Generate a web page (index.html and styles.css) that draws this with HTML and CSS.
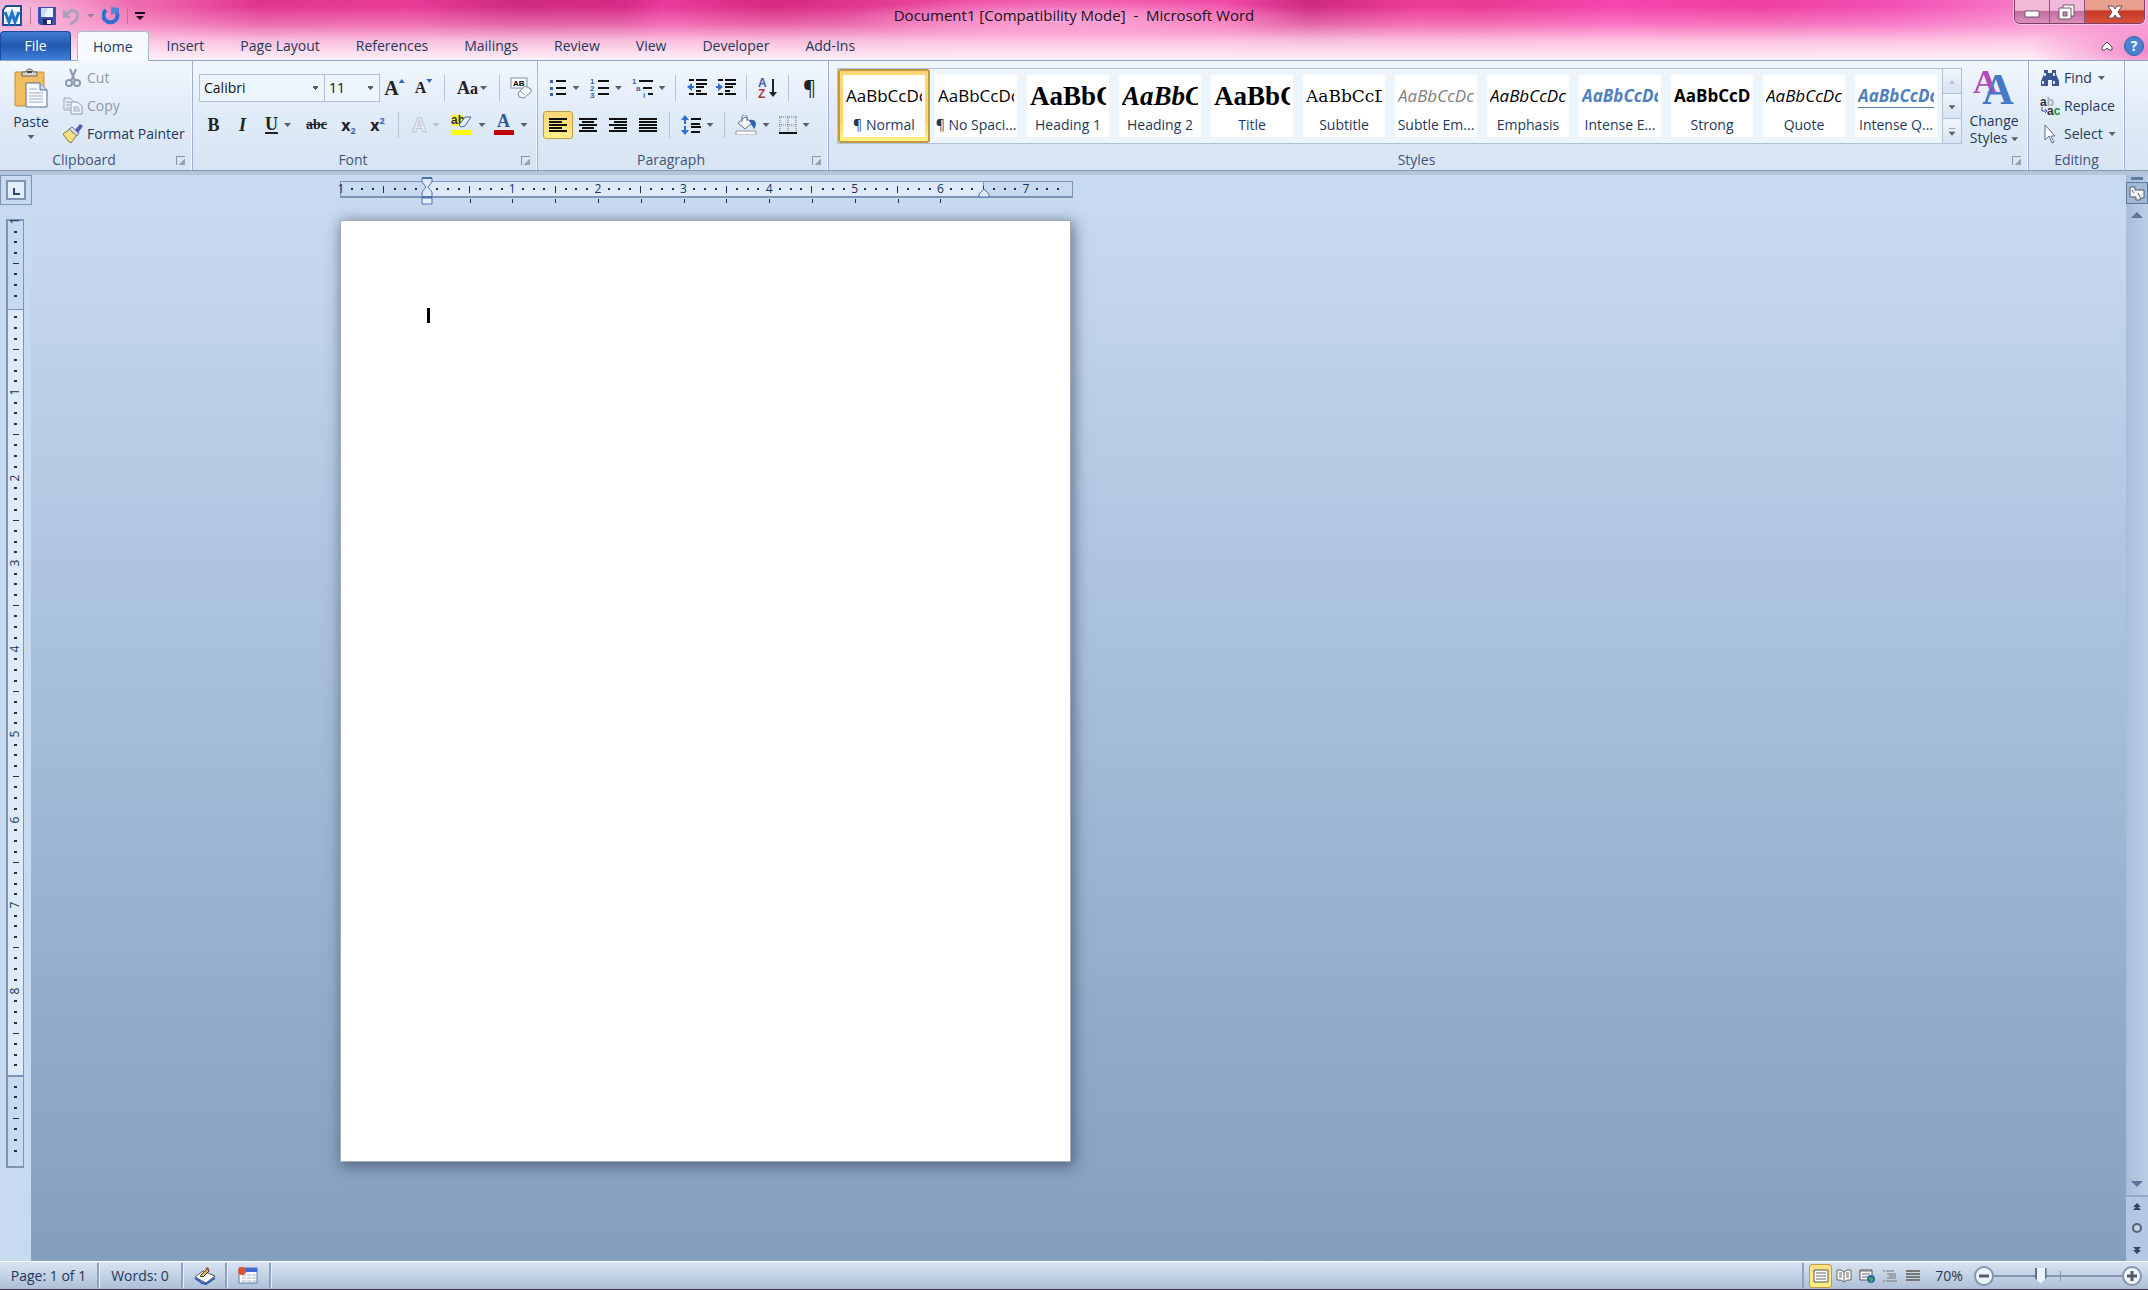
FILE: index.html
```html
<!DOCTYPE html>
<html lang="en">
<head>
  <meta charset="UTF-8">
  <title>Document1 [Compatibility Mode] - Microsoft Word</title>
  <link rel="stylesheet" href="styles.css">
</head>
<body>
  <!-- Title bar and tabs -->
  <header class="top">
    <div class="titlebar">
      <div class="quick-access">
        <svg width="22" height="22" viewBox="0 0 22 22"><path d="M5 1h15v19H2V5z" fill="#fff" stroke="#1c4f94" stroke-width="2"/><path d="M4 6h13v12H4z" fill="#d5e8fa"/><path d="M4 7l4 10 3-9 3 9 4-10" fill="none" stroke="#1f73cc" stroke-width="3"/></svg>
        <span class="qa-line"></span>
        <button aria-label="Save"><svg width="18" height="18" viewBox="0 0 18 18"><path d="M0 0h18v18H2l-2-2z" fill="#3d4fae"/><path d="M3 1h12v9H3z" fill="#c9daf6"/><path d="M10 1h5v9H6z" fill="#eef4fd"/><path d="M5 12h9v6H5z" fill="#1b2a66"/><path d="M9 13h4v4H9z" fill="#fff"/></svg></button>
        <button class="undo" aria-label="Undo"><svg width="32" height="18" viewBox="0 0 32 18"><path d="M3 8c6-8 14-4 11 3-1 3-4 5-7 6" fill="none" stroke="#a9a0bd" stroke-width="3"/><path d="M0 2v9h8z" fill="#a9a0bd"/><path d="M24 7h7l-3 4z" fill="#9b7b94"/></svg></button>
        <button aria-label="Repeat"><svg width="18" height="18" viewBox="0 0 18 18"><path d="M4 3a7 7 0 1 0 9 0" fill="none" stroke="#2f6fd0" stroke-width="4"/><path d="M9 0v8l8-4V1z" fill="#4b86dc"/></svg></button>
        <span class="qa-line"></span>
        <button aria-label="Customize Quick Access Toolbar"><svg width="10" height="8" viewBox="0 0 10 8"><path d="M0 0h10v2H0zM1 4h8L5 8z" fill="#111"/></svg></button>
      </div>
      <h1>Document1 [Compatibility Mode]&nbsp; -&nbsp; Microsoft Word</h1>
      <div class="window-buttons">
        <button class="minimize" aria-label="Minimize"><svg width="16" height="8" viewBox="0 0 16 8"><path d="M1 1h14v6H1z" fill="#fff" stroke="#6c5767"/></svg></button>
        <button class="restore" aria-label="Restore"><svg width="18" height="16" viewBox="0 0 18 16"><path d="M5 1h11v11H5z" fill="#fff" stroke="#6c5767"/><path d="M1 4h12v11H1z" fill="#fff" stroke="#6c5767"/><path d="M5 8h4v4H5z" fill="#c78bb1" stroke="#6c5767"/></svg></button>
        <button class="close" aria-label="Close"><svg width="16" height="14" viewBox="0 0 16 14"><path d="M1 1h5l2 3 2-3h5l-4 6 4 6h-5l-2-3-2 3H1l4-6z" fill="#fff" stroke="#6c4650"/></svg></button>
      </div>
    </div>
    <nav class="tabs">
      <button class="file-tab">File</button>
      <button class="tab active">Home</button>
      <button class="tab">Insert</button>
      <button class="tab">Page Layout</button>
      <button class="tab">References</button>
      <button class="tab">Mailings</button>
      <button class="tab">Review</button>
      <button class="tab">View</button>
      <button class="tab">Developer</button>
      <button class="tab">Add-Ins</button>
      <div class="tab-right">
        <button aria-label="Minimize the Ribbon"><svg width="12" height="10" viewBox="0 0 12 10"><path d="M1 6l5-5 5 5v3H8L6 7 4 9H1z" fill="#fff" stroke="#4e4a58"/></svg></button>
        <button class="help" aria-label="Help">?</button>
      </div>
    </nav>
  </header>

  <!-- Ribbon -->
  <section class="ribbon">
    <div class="group clipboard">
      <div class="group-body">
        <button class="big-button">
          <svg width="34" height="40" viewBox="0 0 34 40"><rect x="1" y="4" width="29" height="34" rx="1" fill="#f0bd60" stroke="#c28f3c"/><path d="M8 8V4h4c0-4 7-4 7 0h4v4z" fill="#d7d4cd" stroke="#686560"/><path d="M13 4h5" stroke="#444" stroke-width="2"/><path d="M12 15h14l7 7v17H12z" fill="#f8faff" stroke="#53739c"/><path d="M26 15v7h7" fill="#cbd9ee" stroke="#53739c"/><path d="M15 21h8M15 25h14M15 28h14M15 31h14M15 34h14" stroke="#9eacc6"/></svg>
          <span>Paste</span>
          <i class="caret"></i>
        </button>
        <div class="side-list">
          <button class="muted"><svg width="20" height="20" viewBox="0 0 20 20"><path d="M7 1l5 12M13 1L8 13" stroke="#8c9bb1" stroke-width="2"/><circle cx="6" cy="15" r="3" fill="none" stroke="#8c9bb1" stroke-width="2"/><circle cx="14" cy="15" r="3" fill="none" stroke="#8c9bb1" stroke-width="2"/></svg>Cut</button>
          <button class="muted"><svg width="20" height="20" viewBox="0 0 20 20"><path d="M1 2h6l4 4v8H1z" fill="#e6edf6" stroke="#9aa8bc"/><path d="M8 6h6l5 4v8H8z" fill="#f2f6fb" stroke="#8d9cb3"/><path d="M3 6h4M3 9h4M3 12h4M10 11h6M10 13h7M10 15h7" stroke="#9aa8bc"/></svg>Copy</button>
          <button><svg width="20" height="20" viewBox="0 0 20 20"><path d="M0 10l7-5 7 6-6 8-3-2z" fill="#f6df82" stroke="#8a7640"/><path d="M6 5l3-2 7 6-2 3z" fill="#d8dee9" stroke="#6c7686"/><path d="M12 6l5-6 3 2-5 7z" fill="#5b58b4"/></svg>Format Painter</button>
        </div>
      </div>
      <div class="group-name">Clipboard<button class="launcher" aria-label="Clipboard options"></button></div>
    </div>

    <div class="group font">
      <div class="group-body rows">
        <div class="row">
          <select class="font-name" aria-label="Font"><option>Calibri</option></select>
          <select class="font-size" aria-label="Font Size"><option>11</option></select>
          <button class="tool serif grow">A<i class="mini up"></i></button>
          <button class="tool serif shrink">A<i class="mini down"></i></button>
          <span class="sep"></span>
          <button class="tool split serif case"><span>A<small>a</small></span><i class="caret"></i></button>
          <span class="sep"></span>
          <button class="tool" aria-label="Clear Formatting"><svg width="22" height="22" viewBox="0 0 22 22"><rect x="1" y="1" width="16" height="10" fill="#fff" stroke="#7e8ea8"/><text x="3" y="9" class="tiny">AB</text><path d="M8 16l7-7 6 3v3l-7 6-5-1z" fill="#f4f6fb" stroke="#7787a5"/><path d="M10 14l5 4" stroke="#9aa9c4"/></svg></button>
        </div>
        <div class="row">
          <button class="tool serif bold">B</button>
          <button class="tool serif italic">I</button>
          <button class="tool split serif under"><span>U</span><i class="caret"></i></button>
          <button class="tool wide serif strike">abc</button>
          <button class="tool script">x<sub>2</sub></button>
          <button class="tool script">x<sup>2</sup></button>
          <span class="sep"></span>
          <button class="tool split effects"><span>A</span><i class="caret pale"></i></button>
          <button class="tool split" aria-label="Text Highlight Color"><svg width="22" height="22" viewBox="0 0 22 22"><rect x="0" y="1" width="12" height="11" fill="#f4f23c"/><text x="0" y="10" class="ab">ab</text><path d="M8 11l6-8h6l-6 9-4 1z" fill="#e4ecf8" stroke="#48679c"/><path d="M1 16h20v5H1z" fill="#ffff00"/></svg><i class="caret"></i></button>
          <button class="tool split" aria-label="Font Color"><svg width="22" height="22" viewBox="0 0 22 22"><text x="4" y="13" class="color-a">A</text><path d="M1 16h20v5H1z" fill="#c00000"/></svg><i class="caret"></i></button>
        </div>
      </div>
      <div class="group-name">Font<button class="launcher" aria-label="Font options"></button></div>
    </div>

    <div class="group paragraph">
      <div class="group-body rows">
        <div class="row">
          <button class="tool split" aria-label="Bullets"><svg width="18" height="18" viewBox="0 0 18 18"><path d="M7 2h10M7 9h10M7 15h10" stroke="#111" stroke-width="2"/><path d="M1 1h3v3H1zM1 8h3v3H1zM1 14h3v3H1z" fill="#3a62b0"/></svg><i class="caret"></i></button>
          <button class="tool split" aria-label="Numbering"><svg width="19" height="20" viewBox="0 0 19 20"><path d="M8 3h11M8 10h11M8 16h11" stroke="#111" stroke-width="2"/><text x="0" y="6" class="num">1</text><text x="0" y="13" class="num">2</text><text x="0" y="20" class="num">3</text></svg><i class="caret"></i></button>
          <button class="tool split" aria-label="Multilevel List"><svg width="22" height="20" viewBox="0 0 22 20"><path d="M8 3h14M12 10h9M17 16h5" stroke="#111" stroke-width="2"/><text x="1" y="6" class="num">1</text><text x="5" y="13" class="num">a</text><text x="12" y="20" class="num">i</text></svg><i class="caret"></i></button>
          <span class="sep"></span>
          <button class="tool" aria-label="Decrease Indent"><svg width="20" height="20" viewBox="0 0 20 20"><path d="M2 2h5M9 2h11M9 6h11M9 9h8M9 13h5M2 16h5M9 16h11" stroke="#111" stroke-width="2"/><path d="M0 9l5-4v3h2v2H5v3z" fill="#2f6fd0"/></svg></button>
          <button class="tool" aria-label="Increase Indent"><svg width="20" height="20" viewBox="0 0 20 20"><path d="M2 2h5M9 2h11M9 6h11M9 9h8M9 13h5M2 16h5M9 16h11" stroke="#111" stroke-width="2"/><path d="M7 9L2 5v3H0v2h2v3z" fill="#2f6fd0"/></svg></button>
          <span class="sep"></span>
          <button class="tool" aria-label="Sort"><svg width="20" height="20" viewBox="0 0 20 20"><text x="0" y="9" class="sort-a">A</text><text x="0" y="20" class="sort-z">Z</text><path d="M15 1v16" stroke="#222" stroke-width="2"/><path d="M11 14h8l-4 5z" fill="#222"/></svg></button>
          <span class="sep"></span>
          <button class="tool pilcrow">¶</button>
        </div>
        <div class="row">
          <button class="tool align on" aria-label="Align Left"><svg width="18" height="16" viewBox="0 0 18 16"><path d="M0 2h18M0 5h13M0 8h18M0 11h13M0 14h18" stroke="#111" stroke-width="2"/></svg></button>
          <button class="tool align" aria-label="Center"><svg width="18" height="16" viewBox="0 0 18 16"><path d="M0 2h18M3 5h12M0 8h18M3 11h12M0 14h18" stroke="#111" stroke-width="2"/></svg></button>
          <button class="tool align" aria-label="Align Right"><svg width="18" height="16" viewBox="0 0 18 16"><path d="M0 2h18M5 5h13M0 8h18M5 11h13M0 14h18" stroke="#111" stroke-width="2"/></svg></button>
          <button class="tool align" aria-label="Justify"><svg width="18" height="16" viewBox="0 0 18 16"><path d="M0 2h18M0 5h18M0 8h18M0 11h18M0 14h18" stroke="#111" stroke-width="2"/></svg></button>
          <span class="sep"></span>
          <button class="tool split" aria-label="Line Spacing"><svg width="20" height="20" viewBox="0 0 20 20"><path d="M10 4h10M10 9h9M10 12h10M10 17h9" stroke="#111" stroke-width="2"/><path d="M4 3v14" stroke="#2f6fd0" stroke-width="2" stroke-dasharray="6 2"/><path d="M0 5l4-5 4 5zM0 15l4 5 4-5z" fill="#2f6fd0"/></svg><i class="caret"></i></button>
          <span class="sep"></span>
          <button class="tool split" aria-label="Shading"><svg width="22" height="20" viewBox="0 0 22 20"><path d="M3 8l7-6 7 6-7 6z" fill="#f7f9fd" stroke="#5f7292"/><path d="M7 7V2c0-3 5-3 5 0v4" fill="none" stroke="#5f7292"/><path d="M14 5c8-2 8 5 5 9l-3-5z" fill="#2e64b4"/><path d="M1 16h20v4H1z" fill="#fff" stroke="#999"/></svg><i class="caret"></i></button>
          <button class="tool split" aria-label="Borders"><svg width="18" height="18" viewBox="0 0 18 18"><path d="M0 1h18M0 9h18M1 0v16M9 0v16M17 0v16" stroke="#777" stroke-dasharray="1 1"/><path d="M0 17h18" stroke="#111" stroke-width="2"/></svg><i class="caret"></i></button>
        </div>
      </div>
      <div class="group-name">Paragraph<button class="launcher" aria-label="Paragraph options"></button></div>
    </div>

    <div class="group styles">
      <div class="group-body">
        <div class="gallery">
          <button class="style on"><span class="sample">AaBbCcDc</span><span class="label">¶ Normal</span></button>
          <button class="style"><span class="sample">AaBbCcDc</span><span class="label">¶ No Spaci...</span></button>
          <button class="style"><span class="sample heading">AaBbC</span><span class="label">Heading 1</span></button>
          <button class="style"><span class="sample heading slanted">AaBbCc</span><span class="label">Heading 2</span></button>
          <button class="style"><span class="sample heading">AaBbC</span><span class="label">Title</span></button>
          <button class="style"><span class="sample subtitle">AaBbCcD</span><span class="label">Subtitle</span></button>
          <button class="style"><span class="sample slanted grey">AaBbCcDc</span><span class="label">Subtle Em...</span></button>
          <button class="style"><span class="sample slanted">AaBbCcDc</span><span class="label">Emphasis</span></button>
          <button class="style"><span class="sample slanted blue">AaBbCcDc</span><span class="label">Intense E...</span></button>
          <button class="style"><span class="sample strong">AaBbCcDc</span><span class="label">Strong</span></button>
          <button class="style"><span class="sample slanted">AaBbCcDc</span><span class="label">Quote</span></button>
          <button class="style"><span class="sample slanted blue lined">AaBbCcDc</span><span class="label">Intense Q...</span></button>
          <div class="gallery-scroll">
            <button aria-label="Previous styles" disabled><i class="caret up pale"></i></button>
            <button aria-label="Next styles"><i class="caret"></i></button>
            <button aria-label="More styles"><i class="caret more"></i></button>
          </div>
        </div>
        <button class="big-button change">
          <svg width="42" height="38" viewBox="0 0 42 38"><text x="0" y="25" class="change-a">A</text><text x="9" y="36" class="change-b">A</text></svg>
          <span>Change</span>
          <span>Styles <i class="caret"></i></span>
        </button>
      </div>
      <div class="group-name">Styles<button class="launcher" aria-label="Styles options"></button></div>
    </div>

    <div class="group editing">
      <div class="group-body">
        <div class="side-list">
          <button><svg width="20" height="18" viewBox="0 0 20 18"><path d="M4 1h4v3h4V1h4v4l3 7v5h-7v-6H8v6H1v-5l3-7z" fill="#3a5591"/><path d="M5 4v3M14 4v3M3 12v3M14 12v3" stroke="#d9e6fa" stroke-width="2"/></svg>Find <i class="caret"></i></button>
          <button><svg width="20" height="20" viewBox="0 0 20 20"><text x="0" y="10" class="ab">a<tspan fill="#a8adb5">b</tspan></text><text x="7" y="19" class="ab">a<tspan fill="#159015">c</tspan></text><path d="M2 11v4h5M5 13l2 2-2 2" fill="none" stroke="#3b55a0"/></svg>Replace</button>
          <button><svg width="20" height="20" viewBox="0 0 20 20"><path d="M5 1v15l4-4 3 7 2-1-3-6h4z" fill="#fff" stroke="#5e6c8e"/></svg>Select <i class="caret"></i></button>
        </div>
      </div>
      <div class="group-name">Editing</div>
    </div>
  </section>

  <!-- Workspace -->
  <main class="workspace">
    <aside class="left-rail">
      <button class="tab-stop" aria-label="Left Tab"><svg width="20" height="20" viewBox="0 0 20 20"><path d="M1 1h18v18H1z" fill="#e4eefa" stroke="#7b94b8" stroke-width="2"/><path d="M8 8v6h6" fill="none" stroke="#2b4a77" stroke-width="2"/></svg></button>
      <div class="ruler vertical" id="rulerV"></div>
    </aside>
    <div class="document">
      <div class="ruler horizontal" id="rulerH">
        <svg class="indent left" width="12" height="28" viewBox="0 0 12 28"><path d="M1 1h10v4l-4 5 4 5v5H1v-5l4-5-4-5z" fill="#dfe8f5" stroke="#4c70ad"/><path d="M1 1h10M1 20h10" stroke="#4c70ad" stroke-width="2"/><path d="M1 21h10v6H1z" fill="#e8eff9" stroke="#4c70ad"/></svg>
        <svg class="indent right" width="12" height="10" viewBox="0 0 12 10"><path d="M1 9V6l5-5 5 5v3z" fill="#dfe8f5" stroke="#4c70ad"/></svg>
      </div>
      <div class="half-ticks" id="halfTicks"></div>
      <div class="paper" contenteditable="true" aria-label="Document"><span class="cursor"></span></div>
    </div>
    <aside class="scrollbar">
      <span class="split-handle"></span>
      <button class="view-ruler" aria-label="View Ruler"><svg width="16" height="16" viewBox="0 0 16 16"><path d="M1 2h5v3h9v8h-4v2H7v-3H1z" fill="#f5f3f6" stroke="#555a66"/><path d="M3 5l2 3M9 8l2 4" stroke="#555a66"/></svg></button>
      <button aria-label="Scroll up"><i class="arrow up"></i></button>
      <div class="track"></div>
      <button aria-label="Scroll down"><i class="arrow"></i></button>
      <button class="browse first" aria-label="Previous Page"><svg width="8" height="8" viewBox="0 0 8 8"><path d="M4 0l4 4H0zM4 3l4 4H0z" fill="#37435a"/></svg></button>
      <button class="browse" aria-label="Select Browse Object"><svg width="10" height="10" viewBox="0 0 10 10"><circle cx="5" cy="5" r="4" fill="#c3d2e4" stroke="#566273" stroke-width="2"/></svg></button>
      <button class="browse" aria-label="Next Page"><svg width="8" height="8" viewBox="0 0 8 8"><path d="M4 8L0 4h8zM4 5L0 1h8z" fill="#37435a"/></svg></button>
    </aside>
  </main>

  <!-- Status bar -->
  <footer class="status">
    <button class="cell page-cell">Page: 1 of 1</button>
    <button class="cell words-cell">Words: 0</button>
    <button class="cell icon-cell" aria-label="Proofing"><svg width="22" height="18" viewBox="0 0 22 18"><path d="M1 10l8-6 12 5-9 7z" fill="#fff" stroke="#555"/><path d="M1 11l7 5 4 1 9-6" fill="none" stroke="#2f5fc0" stroke-width="2"/><path d="M6 9l7-7 2 2-6 6z" fill="#e6b83c" stroke="#444"/><path d="M11 1l3-1 2 4z" fill="#cf4a3a"/></svg></button>
    <button class="cell icon-cell" aria-label="Macro Recording"><svg width="20" height="17" viewBox="0 0 20 17"><path d="M1 1h18v15H1z" fill="#fff" stroke="#5c79b0"/><path d="M1 1h18v4H1z" fill="#3c6bd6"/><path d="M4 8h4M9 8h4M14 8h4M4 11h4M9 11h4M14 11h4M4 14h4M9 14h4M14 14h4" stroke="#9fb0cc"/><circle cx="4" cy="4" r="4" fill="#d8553a"/></svg></button>
    <div class="status-right">
      <span class="sbar"></span>
      <button class="view on" aria-label="Print Layout"><svg width="16" height="14" viewBox="0 0 16 14"><path d="M1 1h14v12H1z" fill="#fff" stroke="#555"/><path d="M3 4h10M3 7h10M3 10h10" stroke="#666"/></svg></button>
      <button class="view" aria-label="Full Screen Reading"><svg width="16" height="14" viewBox="0 0 16 14"><path d="M1 1h4l3 2 3-2h4v10h-4l-3 2-3-2H1z" fill="#fff" stroke="#666"/><path d="M8 3v10M3 4h3M3 6h3M3 8h3M10 4h3M10 6h3M10 8h3" stroke="#666"/></svg></button>
      <button class="view" aria-label="Web Layout"><svg width="16" height="14" viewBox="0 0 16 14"><path d="M1 1h12v10H1z" fill="#fff" stroke="#555"/><path d="M1 2h12M3 5h8M3 8h6" stroke="#666"/><circle cx="12" cy="10" r="4" fill="#2c6ba8"/><path d="M10 9l3 1-1 3" stroke="#3faf50" stroke-width="2" fill="none"/></svg></button>
      <button class="view" aria-label="Outline"><svg width="14" height="12" viewBox="0 0 14 12"><path d="M0 1h2M3 1h8M4 4h9M6 6h7M4 8h9M0 11h2M3 11h11" stroke="#777"/></svg></button>
      <button class="view" aria-label="Draft"><svg width="14" height="12" viewBox="0 0 14 12"><path d="M0 1h14M0 4h14M0 7h14M0 10h14" stroke="#777" stroke-width="2"/></svg></button>
      <button class="zoom-level">70%</button>
      <button class="round" aria-label="Zoom Out"><svg width="10" height="10" viewBox="0 0 10 10"><path d="M0 5h10" stroke="#555b66" stroke-width="3"/></svg></button>
      <input class="zoom" type="range" min="0" max="100" value="35" aria-label="Zoom">
      <button class="round" aria-label="Zoom In"><svg width="10" height="10" viewBox="0 0 10 10"><path d="M0 5h10M5 0v10" stroke="#555b66" stroke-width="3"/></svg></button>
    </div>
  </footer>

  <script src="ruler.js"></script>
</body>
</html>
```
FILE: styles.css
```css
* {
  box-sizing: border-box;
}
body {
  margin: 0;
  height: 100vh;
  display: flex;
  flex-direction: column;
  overflow: hidden;
  font-family: "Open Sans", "Noto Sans", sans-serif;
  font-size: 14px;
  line-height: 18px;
  color: #1e395b;
}
button {
  border: 0;
  padding: 0;
  margin: 0;
  background: none;
  font: inherit;
  color: inherit;
}
svg {
  display: block;
  flex: none;
}

/* Title bar */
.top {
  background:
    radial-gradient(ellipse 140px 34px at 0% 20%, rgba(250, 205, 230, 0.9), transparent),
    radial-gradient(ellipse 120px 40px at 100% 85%, rgba(240, 110, 190, 0.8), transparent),
    radial-gradient(ellipse 230px 22px at 50% 30%, rgba(255, 200, 230, 0.65), transparent),
    linear-gradient(rgba(255, 255, 255, 0) 10%, rgba(255, 190, 225, 0.4) 40%, rgba(255, 215, 236, 0.85) 68%, #fef2f8),
    linear-gradient(90deg, #f080bc 0, #ee66ac 7%, #e0358f 12%, #e83c97 19%, #cf2a80 24%, #d62b86 29%, #ea3a9c 31%, #d6297f 36%, #ee4ba4 45%, #f04aa6 57%, #cf2a80 61%, #ec3c96 66%, #ea3a93 69%, #f545ae 75%, #ee40a0 82%, #f34fb5 88%, #f9a0d6 100%);
  border-bottom: 1px solid #8ea5c2;
}
.titlebar {
  height: 31px;
  display: grid;
  grid-template-columns: 1fr auto 1fr;
}
.quick-access {
  display: flex;
  align-items: center;
  gap: 7px;
  padding-left: 1px;
}
.qa-line {
  width: 1px;
  height: 17px;
  background: #a87b97;
}
.titlebar h1 {
  margin: 0;
  font-size: 15px;
  line-height: 30px;
  font-weight: 400;
  color: #1a1018;
}
.window-buttons {
  display: flex;
  justify-self: end;
  height: 24px;
  margin-right: 3px;
  border: 1px solid #7f3f62;
  border-top: 0;
  border-radius: 0 0 6px 6px;
  box-shadow: 0 0 0 1px rgba(255, 220, 240, 0.7);
  overflow: hidden;
}
.window-buttons button {
  width: 35px;
  display: flex;
  align-items: center;
  justify-content: center;
  border-right: 1px solid #8f4f76;
  background: linear-gradient(#f2b9d9 45%, #c46c9f 50%, #dc8fbc);
}
.window-buttons .minimize {
  padding-top: 5px;
}
.window-buttons .close {
  width: 59px;
  border-right: 0;
  background: linear-gradient(#e9a08e 40%, #c8392a 50%, #d9513a);
}

/* Tabs */
.tabs {
  display: flex;
  height: 29px;
}
.file-tab {
  width: 71px;
  margin-right: 6px;
  color: #fff;
  border: 1px solid #1b479c;
  border-bottom: 0;
  border-radius: 4px 4px 0 0;
  background: linear-gradient(#3f7cd0, #2359b0 50%, #3f80dd);
}
.tab {
  padding: 0 18px;
}
.tab.active {
  background: #f6fafe;
  border: 1px solid #a9bbd3;
  border-bottom: 0;
  border-radius: 4px 4px 0 0;
  padding: 0 15px;
  margin-bottom: -1px;
}
.tab-right {
  margin-left: auto;
  display: flex;
  align-items: center;
  gap: 11px;
  padding-right: 4px;
}
.help {
  width: 20px;
  height: 20px;
  border-radius: 50%;
  border: 1px solid #2d62b0;
  background: #4b83d0;
  color: #fff;
  font-weight: 700;
  line-height: 18px;
}

/* Ribbon */
.ribbon {
  display: flex;
  height: 110px;
  background: linear-gradient(#f1f7fd, #e0ebf8 50%, #d8e4f2);
  border-bottom: 1px solid #8499b8;
}
.group {
  display: flex;
  flex-direction: column;
  padding-top: 7px;
  border-right: 1px solid #9db2d0;
  box-shadow: inset -1px 0 #f5f9fe;
}
.clipboard {
  width: 193px;
}
.font {
  width: 345px;
}
.paragraph {
  width: 291px;
}
.styles {
  width: 1200px;
}
.editing {
  width: 96px;
}
.group-body {
  height: 82px;
  display: flex;
}
.group-name {
  text-align: center;
  line-height: 20px;
  color: #3f557d;
  position: relative;
  padding-right: 24px;
}
.editing .group-name {
  padding-right: 0;
}
.launcher {
  position: absolute;
  right: 7px;
  top: 6px;
  width: 9px;
  height: 9px;
  border-top: 1px solid #8694aa;
  border-left: 1px solid #8694aa;
  background: linear-gradient(135deg, transparent 60%, #96a2b4 60%);
}
.caret {
  display: inline-block;
  width: 7px;
  height: 4px;
  background: #5a5f69;
  clip-path: polygon(0 0, 100% 0, 50% 100%);
  vertical-align: middle;
}
.caret.up {
  clip-path: polygon(50% 0, 100% 100%, 0 100%);
}
.caret.pale {
  background: #b7c3d3;
}
.caret.more {
  height: 8px;
  clip-path: polygon(0 0, 100% 0, 100% 12%, 0 12%, 0 50%, 100% 50%, 50% 100%, 0 50%);
}
.big-button {
  display: flex;
  flex-direction: column;
  align-items: center;
  width: 62px;
}
.big-button svg {
  margin-bottom: 5px;
}
.clipboard .caret {
  margin-top: 4px;
}
.side-list {
  display: flex;
  flex-direction: column;
  gap: 8px;
}
.side-list button {
  display: flex;
  align-items: center;
  gap: 4px;
  height: 20px;
  white-space: nowrap;
}
.side-list .caret {
  margin-left: 2px;
}
.clipboard .side-list {
  margin-left: 1px;
}
.muted {
  color: #8e99aa;
}
.editing .side-list {
  margin-left: 11px;
}

.rows {
  flex-direction: column;
  gap: 9px;
  padding: 6px 0 0 5px;
}
.font .rows {
  padding-left: 6px;
}
.row {
  display: flex;
  height: 28px;
}
.tool {
  width: 29px;
  display: flex;
  align-items: center;
  justify-content: center;
  color: #222;
}
.split {
  width: 42px;
  gap: 8px;
}
.split svg,
.split span {
  margin-right: -2px;
}
.wide {
  width: 35px;
}
.align {
  width: 30px;
}
.tool.on {
  border: 1px solid #c29b45;
  border-radius: 3px;
  background: linear-gradient(#fbd777, #fbe27f 60%, #fff08a);
}
.sep {
  width: 1px;
  margin: 1px 6px;
  background: #b4c3d9;
}
select {
  appearance: none;
  border: 1px solid #afc1db;
  border-radius: 0;
  padding: 0 4px;
  font: inherit;
  color: #111;
  background:
    linear-gradient(#5a5f69, #5a5f69) right 8px center / 1px 3px no-repeat,
    linear-gradient(#5a5f69, #5a5f69) right 7px top 12px / 3px 2px no-repeat,
    linear-gradient(#5a5f69, #5a5f69) right 6px top 11px / 5px 2px no-repeat,
    #edf5fc;
}
.font-name {
  width: 126px;
}
.font-size {
  width: 55px;
  border-left: 0;
}
.serif {
  font-family: "Liberation Serif", serif;
  font-size: 18px;
  font-weight: 700;
}
.grow {
  font-size: 20px;
}
.shrink {
  font-size: 16px;
}
.mini {
  width: 6px;
  height: 4px;
  background: #3463b5;
  align-self: flex-start;
  margin-top: 5px;
  clip-path: polygon(0 0, 100% 0, 50% 100%);
}
.mini.up {
  clip-path: polygon(50% 0, 100% 100%, 0 100%);
}
.case {
  gap: 4px;
}
.case small {
  font-size: 16px;
}
.italic {
  font-style: italic;
}
.under span {
  border-bottom: 2px solid #222;
  line-height: 16px;
}
.strike {
  font-size: 14px;
  text-decoration: line-through;
}
.script {
  font-weight: 700;
  font-size: 16px;
}
.script sub,
.script sup {
  font-size: 9px;
  line-height: 9px;
  color: #3463b5;
}
.script sub {
  align-self: flex-end;
  margin-bottom: 4px;
}
.script sup {
  align-self: flex-start;
  margin-top: 5px;
}
.effects {
  font-size: 20px;
  font-weight: 700;
  color: #e9edf3;
  -webkit-text-stroke: 1px #c1c8d2;
}
.pilcrow {
  font-size: 20px;
}
.tiny {
  font: 700 8px "Liberation Sans", sans-serif;
}
.ab {
  font: 700 12px "Liberation Sans", sans-serif;
  fill: #333;
}
.color-a {
  font: 700 18px "Liberation Serif", serif;
  fill: #33549a;
}
.num {
  font: 700 8px "Liberation Sans", sans-serif;
  fill: #3a62b0;
}
.sort-a,
.sort-z {
  font: 700 12px "Liberation Sans", sans-serif;
  fill: #3a5fa8;
}
.sort-z {
  fill: #a83b3b;
}

/* Styles gallery */
.gallery {
  display: flex;
  height: 76px;
  margin-left: 8px;
  border: 1px solid #afc1db;
  background: #edf5fc;
}
.style {
  width: 92px;
  padding: 6px 5px;
}
.style.on {
  border: 2px solid #c59a3c;
  border-radius: 3px;
  padding: 4px 3px;
  background: linear-gradient(#fbd777, #fbd469 70%, #fff08a);
}
.sample,
.label {
  display: block;
  background: #fff;
  overflow: hidden;
  white-space: nowrap;
}
.sample {
  height: 38px;
  padding: 0;
  border: solid #fff;
  border-width: 0 3px;
  line-height: 42px;
  font-size: 17px;
  color: #000;
  text-align: left;
}
.label {
  height: 24px;
  line-height: 24px;
}
.heading {
  font-family: "Liberation Serif", serif;
  font-size: 27px;
  font-weight: 700;
}
.subtitle {
  font-family: "DejaVu Serif", serif;
}
.slanted {
  font-style: italic;
}
.grey {
  color: #808080;
}
.blue {
  color: #4f81bd;
  font-weight: 700;
}
.lined {
  background: linear-gradient(#4f81bd, #4f81bd) left bottom 5px / 100% 1px no-repeat #fff;
}
.strong {
  font-weight: 700;
}
.gallery-scroll {
  display: flex;
  flex-direction: column;
  width: 19px;
  border-left: 1px solid #afc1db;
}
.gallery-scroll button {
  flex: 1;
  line-height: 8px;
  background: linear-gradient(#f1f6fc, #d7e3f2);
}
.gallery-scroll button + button {
  border-top: 1px solid #afc1db;
}
.change {
  width: 64px;
}
.change svg {
  margin-bottom: 6px;
}
.change span {
  line-height: 17px;
}
.change-a {
  font: 700 34px "Liberation Serif", serif;
  fill: #b04cba;
}
.change-b {
  font: 700 44px "Liberation Serif", serif;
  fill: #4579c8;
}

/* Workspace */
.workspace {
  flex: 1;
  min-height: 0;
  display: flex;
  border-top: 4px solid #b4c5da;
  background: linear-gradient(#c8daf0 3%, #9bb5d2 62%, #839fbd);
}
.left-rail {
  width: 31px;
  background: #c8daf0;
}
.tab-stop {
  display: flex;
  align-items: center;
  justify-content: center;
  width: 32px;
  height: 30px;
  border: 1px solid #7b94b8;
}
.ruler {
  display: flex;
  justify-content: space-between;
  border: 1px solid #7b94b8;
  font-size: 12px;
  line-height: 14px;
  color: #12335f;
  position: relative;
}
.ruler span,
.half-ticks span {
  display: flex;
  align-items: center;
  justify-content: center;
}
.ruler i {
  flex: none;
  width: 2px;
  height: 2px;
  background: #12335f;
}
.horizontal span {
  width: 0;
}
.horizontal .half {
  width: 1px;
  height: 7px;
}
.horizontal {
  width: 733px;
  height: 17px;
  padding-right: 3px;
  border-bottom-width: 2px;
  background: linear-gradient(90deg, #c8daf0 87px, #deeaf8 87px 642px, #7b94b8 642px 643px, #c8daf0 643px);
}
.vertical {
  flex-direction: column;
  width: 18px;
  height: 949px;
  margin: 14px 0 0 6px;
  padding-bottom: 4px;
  border-width: 2px 1px 2px 2px;
  background: linear-gradient(#c8daf0 88px, #7b94b8 88px 89px, #deeaf8 89px 854px, #7b94b8 854px 856px, #c8daf0 856px);
}
.vertical span {
  height: 0;
}
.vertical i {
  width: 3px;
}
.vertical .half {
  width: 6px;
  height: 1px;
}
.vertical b {
  transform: rotate(-90deg);
}
.ruler b {
  font-weight: 400;
}
.indent {
  position: absolute;
}
.indent.left {
  left: 80px;
  top: -5px;
}
.indent.right {
  left: 637px;
  top: 6px;
}
.document {
  flex: 1;
  padding: 6px 0 0 309px;
}
.half-ticks {
  display: flex;
  justify-content: space-between;
  width: 471px;
  height: 4px;
  margin: 1px 0 0 130px;
}
.half-ticks span {
  width: 0;
}
.half-ticks i {
  flex: none;
  width: 1px;
  height: 4px;
  background: #12335f;
}
.paper {
  width: 731px;
  height: 942px;
  margin-top: 17px;
  padding: 87px 86px;
  background: #fff;
  border: 1px solid #a5acb5;
  box-shadow: 2px 3px 14px 1px rgba(50, 65, 90, 0.65);
  outline: 0;
}
.cursor {
  display: block;
  width: 3px;
  height: 15px;
  background: #000;
}

/* Scroll bar */
.scrollbar {
  width: 22px;
  display: flex;
  flex-direction: column;
  background: linear-gradient(90deg, #a9bdd8, #bccfe8);
}
.split-handle {
  height: 3px;
  margin: 2px 5px;
  background: #5f7a9c;
}
.scrollbar button {
  display: flex;
  align-items: center;
  justify-content: center;
  height: 22px;
}
.scrollbar .view-ruler {
  border: 1px solid #5f7a9c;
  background: #9fb8d6;
}
.arrow {
  width: 12px;
  height: 6px;
  background: #62729a;
  clip-path: polygon(0 0, 100% 0, 50% 100%);
}
.arrow.up {
  clip-path: polygon(50% 0, 100% 100%, 0 100%);
}
.track {
  flex: 1;
}
.scrollbar .browse {
  background: #b1c7e2;
}
.scrollbar .first {
  border-top: 2px solid #93aac8;
}

/* Status bar */
.status {
  display: flex;
  height: 29px;
  padding: 1px 0;
  border-top: 1px solid #fff;
  border-bottom: 1px solid #4d2a4d;
  background: linear-gradient(#d8e4f3, #aebfd5);
}
.cell {
  border-right: 2px solid #8ea2bf;
  box-shadow: 1px 0 #e5eef9;
}
.page-cell {
  width: 99px;
}
.words-cell {
  width: 84px;
}
.icon-cell {
  width: 44px;
  padding-left: 11px;
}
.status-right {
  margin-left: auto;
  display: flex;
  align-items: center;
  padding-right: 6px;
}
.sbar {
  width: 2px;
  height: 25px;
  margin-right: 5px;
  background: #8ea2bf;
}
.view {
  width: 23px;
  height: 24px;
  display: flex;
  align-items: center;
  justify-content: center;
}
.view.on {
  border: 1px solid #c29b45;
  border-radius: 3px;
  background: linear-gradient(#fbdf8c, #ffef80);
}
.zoom-level {
  width: 50px;
}
.round {
  width: 20px;
  height: 20px;
  display: flex;
  align-items: center;
  justify-content: center;
  border: 2px solid #8495ad;
  border-radius: 50%;
  background: #eef3fa;
}
.zoom {
  appearance: none;
  width: 128px;
  height: 20px;
  margin: 0;
  background:
    linear-gradient(#8495ad, #8495ad) 66px center / 1px 10px no-repeat,
    linear-gradient(#8495ad, #8495ad) center / 100% 2px no-repeat;
}
.zoom::-webkit-slider-thumb {
  appearance: none;
  width: 12px;
  height: 16px;
  background: linear-gradient(90deg, #5f738f 2px, #eef3fa 2px 10px, #5f738f 10px);
  clip-path: polygon(0 0, 100% 0, 100% 65%, 50% 100%, 0 65%);
}
```
FILE: ruler.js
```js
// One mark per eighth of an inch, numbers count away from the margin
function fillRuler(id, eighths) {
  const ruler = document.getElementById(id);
  for (let i = 0; i <= eighths; i++) {
    const cell = document.createElement("span");
    const inch = Math.abs(i / 8 - 1);
    if (i % 8 === 0) {
      if (inch > 0 && inch < 9) {
        const number = document.createElement("b");
        number.textContent = inch;
        cell.appendChild(number);
      }
    } else if (i < eighths) {
      const mark = document.createElement("i");
      if (i % 4 === 0) mark.className = "half";
      cell.appendChild(mark);
    }
    ruler.appendChild(cell);
  }
}

fillRuler("rulerH", 68);
fillRuler("rulerV", 88);

// Default tab stops under the ruler
const halfTicks = document.getElementById("halfTicks");
for (let i = 0; i < 12; i++) {
  const cell = document.createElement("span");
  cell.appendChild(document.createElement("i"));
  halfTicks.appendChild(cell);
}
```
